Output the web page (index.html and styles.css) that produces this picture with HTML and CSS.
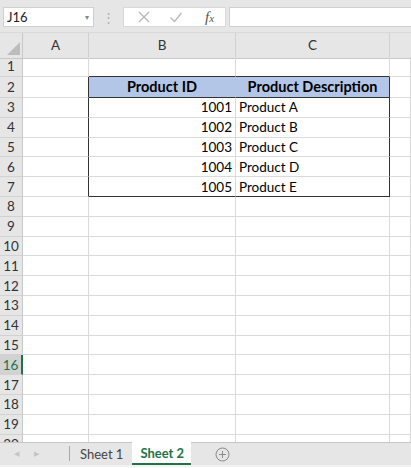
FILE: index.html
```html
<!DOCTYPE html>
<html lang="en">
<head>
    <meta charset="UTF-8">
    <meta name="viewport" content="width=device-width, initial-scale=1.0">
    <title>Sheet 2</title>
    <link rel="stylesheet" href="styles.css">
</head>
<body>
    <div class="formula-bar">
        <div class="name-box">
            <span>J16</span>
            <span class="caret">&#9662;</span>
        </div>
        <div class="grip">&#8942;</div>
        <div class="fx-buttons">
            <svg class="btn-icon" width="14" height="14" viewBox="0 0 14 14">
                <path d="M2 2 L12 12 M12 2 L2 12" stroke="#b8b8b8" stroke-width="1.3" fill="none"/>
            </svg>
            <svg class="btn-icon" width="14" height="14" viewBox="0 0 14 14">
                <path d="M1.5 7.5 L5.5 11.5 L12.5 3" stroke="#b8b8b8" stroke-width="1.3" fill="none"/>
            </svg>
            <span class="fx">f<small>x</small></span>
        </div>
        <div class="formula-input"></div>
    </div>

    <div class="sheet">
        <div class="row head-row">
            <div class="corner"><div class="triangle"></div></div>
            <div class="col-head">A</div>
            <div class="col-head">B</div>
            <div class="col-head">C</div>
            <div class="col-head last"></div>
        </div>

        <div class="row">
            <div class="row-head">1</div>
            <div class="cell"></div>
            <div class="cell dark-bottom"></div>
            <div class="cell dark-bottom"></div>
            <div class="cell"></div>
        </div>
        <div class="row title-row">
            <div class="row-head">2</div>
            <div class="cell dark-right"></div>
            <div class="cell th no-right dark-bottom">Product ID</div>
            <div class="cell th dark-bottom dark-right">Product Description</div>
            <div class="cell"></div>
        </div>
        <div class="row">
            <div class="row-head">3</div>
            <div class="cell dark-right"></div>
            <div class="cell num">1001</div>
            <div class="cell dark-right">Product A</div>
            <div class="cell"></div>
        </div>
        <div class="row">
            <div class="row-head">4</div>
            <div class="cell dark-right"></div>
            <div class="cell num">1002</div>
            <div class="cell dark-right">Product B</div>
            <div class="cell"></div>
        </div>
        <div class="row">
            <div class="row-head">5</div>
            <div class="cell dark-right"></div>
            <div class="cell num">1003</div>
            <div class="cell dark-right">Product C</div>
            <div class="cell"></div>
        </div>
        <div class="row">
            <div class="row-head">6</div>
            <div class="cell dark-right"></div>
            <div class="cell num">1004</div>
            <div class="cell dark-right">Product D</div>
            <div class="cell"></div>
        </div>
        <div class="row">
            <div class="row-head">7</div>
            <div class="cell dark-right"></div>
            <div class="cell num dark-bottom">1005</div>
            <div class="cell dark-right dark-bottom">Product E</div>
            <div class="cell"></div>
        </div>
        <div class="row"><div class="row-head">8</div><div class="cell"></div><div class="cell"></div><div class="cell"></div><div class="cell"></div></div>
        <div class="row"><div class="row-head">9</div><div class="cell"></div><div class="cell"></div><div class="cell"></div><div class="cell"></div></div>
        <div class="row"><div class="row-head">10</div><div class="cell"></div><div class="cell"></div><div class="cell"></div><div class="cell"></div></div>
        <div class="row"><div class="row-head">11</div><div class="cell"></div><div class="cell"></div><div class="cell"></div><div class="cell"></div></div>
        <div class="row"><div class="row-head">12</div><div class="cell"></div><div class="cell"></div><div class="cell"></div><div class="cell"></div></div>
        <div class="row"><div class="row-head">13</div><div class="cell"></div><div class="cell"></div><div class="cell"></div><div class="cell"></div></div>
        <div class="row"><div class="row-head">14</div><div class="cell"></div><div class="cell"></div><div class="cell"></div><div class="cell"></div></div>
        <div class="row"><div class="row-head">15</div><div class="cell"></div><div class="cell"></div><div class="cell"></div><div class="cell"></div></div>
        <div class="row"><div class="row-head active">16</div><div class="cell"></div><div class="cell"></div><div class="cell"></div><div class="cell"></div></div>
        <div class="row"><div class="row-head">17</div><div class="cell"></div><div class="cell"></div><div class="cell"></div><div class="cell"></div></div>
        <div class="row"><div class="row-head">18</div><div class="cell"></div><div class="cell"></div><div class="cell"></div><div class="cell"></div></div>
        <div class="row"><div class="row-head">19</div><div class="cell"></div><div class="cell"></div><div class="cell"></div><div class="cell"></div></div>
        <div class="row cut"><div class="row-head"><span>20</span></div><div class="cell"></div><div class="cell"></div><div class="cell"></div><div class="cell"></div></div>
    </div>

    <div class="tab-bar">
        <div class="nav">
            <span class="arrow">&#9664;</span>
            <span class="arrow">&#9654;</span>
        </div>
        <div class="tab">Sheet 1</div>
        <div class="tab selected">Sheet 2</div>
        <div class="add-sheet">
            <svg width="15" height="15" viewBox="0 0 15 15">
                <circle cx="7.5" cy="7.5" r="6.5" stroke="#8a8a8a" stroke-width="1" fill="none"/>
                <path d="M7.5 4 V11 M4 7.5 H11" stroke="#8a8a8a" stroke-width="1"/>
            </svg>
        </div>
    </div>
</body>
</html>
```

FILE: styles.css
```css
body {
    margin: 0;
    padding: 0;
    width: 411px;
    height: 468px;
    overflow: hidden;
    font-family: Lato, "Liberation Sans", sans-serif;
    font-size: 14px;
    color: #000;
    background: #fff;
}

/* formula bar */
.formula-bar {
    height: 33px;
    background: #e6e6e6;
    display: flex;
    align-items: flex-start;
    padding-top: 7px;
    box-sizing: border-box;
    border-bottom: 1px solid #d9d9d9;
}

.name-box {
    margin-left: 3px;
    width: 91px;
    height: 20px;
    background: #fff;
    border: 1px solid #d0d0d0;
    box-sizing: border-box;
    display: flex;
    align-items: center;
    justify-content: space-between;
    padding: 0 4px 0 3px;
    font-size: 13px;
    color: #222;
}

.name-box .caret {
    font-size: 8px;
    color: #888;
}

.grip {
    width: 29px;
    text-align: center;
    color: #b0b0b0;
    font-size: 13px;
    line-height: 20px;
}

.fx-buttons {
    width: 103px;
    height: 20px;
    background: #fff;
    border: 1px solid #d8d8d8;
    box-sizing: border-box;
    display: flex;
    align-items: center;
    padding-left: 13px;
    gap: 18px;
}

.fx {
    font-family: "Liberation Serif", serif;
    font-style: italic;
    font-size: 15px;
    color: #555;
    margin-left: 4px;
}

.fx small {
    font-size: 11px;
}

.formula-input {
    flex: 1;
    margin-left: 3px;
    height: 20px;
    background: #fff;
    border: 1px solid #d0d0d0;
    border-right: none;
    box-sizing: border-box;
}

/* grid */
.sheet {
    height: 409px;
    overflow: hidden;
}

.row {
    display: grid;
    grid-template-columns: 23px 66px 147px 154px 1fr;
    height: 19.8px;
}

.head-row {
    height: 24px;
}

.title-row {
    height: 21.3px;
}

.corner {
    background: #e6e6e6;
    border-right: 1px solid #c8c8c8;
    border-bottom: 1px solid #c8c8c8;
    box-sizing: border-box;
    position: relative;
}

.triangle {
    position: absolute;
    right: 2px;
    bottom: 3px;
    width: 13px;
    height: 13px;
    background: #bdbdbd;
    clip-path: polygon(100% 0, 100% 100%, 0 100%);
}

.col-head {
    background: #e6e6e6;
    border-right: 1px solid #d0d0d0;
    border-bottom: 1px solid #c8c8c8;
    box-sizing: border-box;
    text-align: center;
    line-height: 25px;
    font-size: 13.5px;
    color: #333;
}

.col-head.last {
    border-right: none;
}

.row-head {
    background: #e6e6e6;
    border-right: 1px solid #c8c8c8;
    border-bottom: 1px solid #d2d2d2;
    box-sizing: border-box;
    text-align: center;
    font-size: 13.5px;
    color: #333;
    display: flex;
    align-items: center;
    justify-content: center;
}

.row-head.active {
    background: #d2d2d2;
    color: #217346;
    border-right: 2px solid #217346;
}

.cell {
    border-right: 1px solid #dadada;
    border-bottom: 1px solid #dadada;
    box-sizing: border-box;
    display: flex;
    align-items: center;
    padding: 0 3px;
    font-size: 13.5px;
    white-space: nowrap;
    overflow: hidden;
}

.cell.num {
    justify-content: flex-end;
}

.cell.th {
    background: #b4c6e7;
    font-weight: bold;
    justify-content: center;
    font-size: 14.5px;
}

.cell.no-right {
    border-right-color: #b4c6e7;
}

.cell.dark-right {
    border-right-color: #333;
}

.cell.dark-bottom {
    border-bottom-color: #333;
}

.cut {
    height: 8px;
}

.cut .row-head {
    align-items: flex-start;
    overflow: hidden;
    border-bottom: none;
}

.cut .row-head span {
    line-height: 16px;
    margin-top: 1px;
}

.cut .cell {
    border-bottom: none;
}

/* sheet tabs */
.tab-bar {
    height: 22px;
    background: #e6e6e6;
    border-top: 1px solid #c6c6c6;
    border-bottom: 2px solid #f2f2f2;
    display: flex;
    align-items: stretch;
    font-size: 13px;
}

.nav {
    width: 70px;
    display: flex;
    align-items: center;
    padding-left: 14px;
    gap: 15px;
    box-sizing: border-box;
    border-right: 1px solid #a9a9a9;
    margin: 3px 0 4px;
    color: #c4c4c4;
    font-size: 7px;
}

.tab {
    padding: 0 9px 0 10px;
    display: flex;
    align-items: center;
    color: #444;
}

.tab.selected {
    background: #fff;
    color: #217346;
    font-weight: bold;
    border-bottom: 2px solid #217346;
    margin-top: -1px;
    padding: 0 7px 0 8px;
}

.add-sheet {
    display: flex;
    align-items: center;
    padding-left: 24px;
}
```
